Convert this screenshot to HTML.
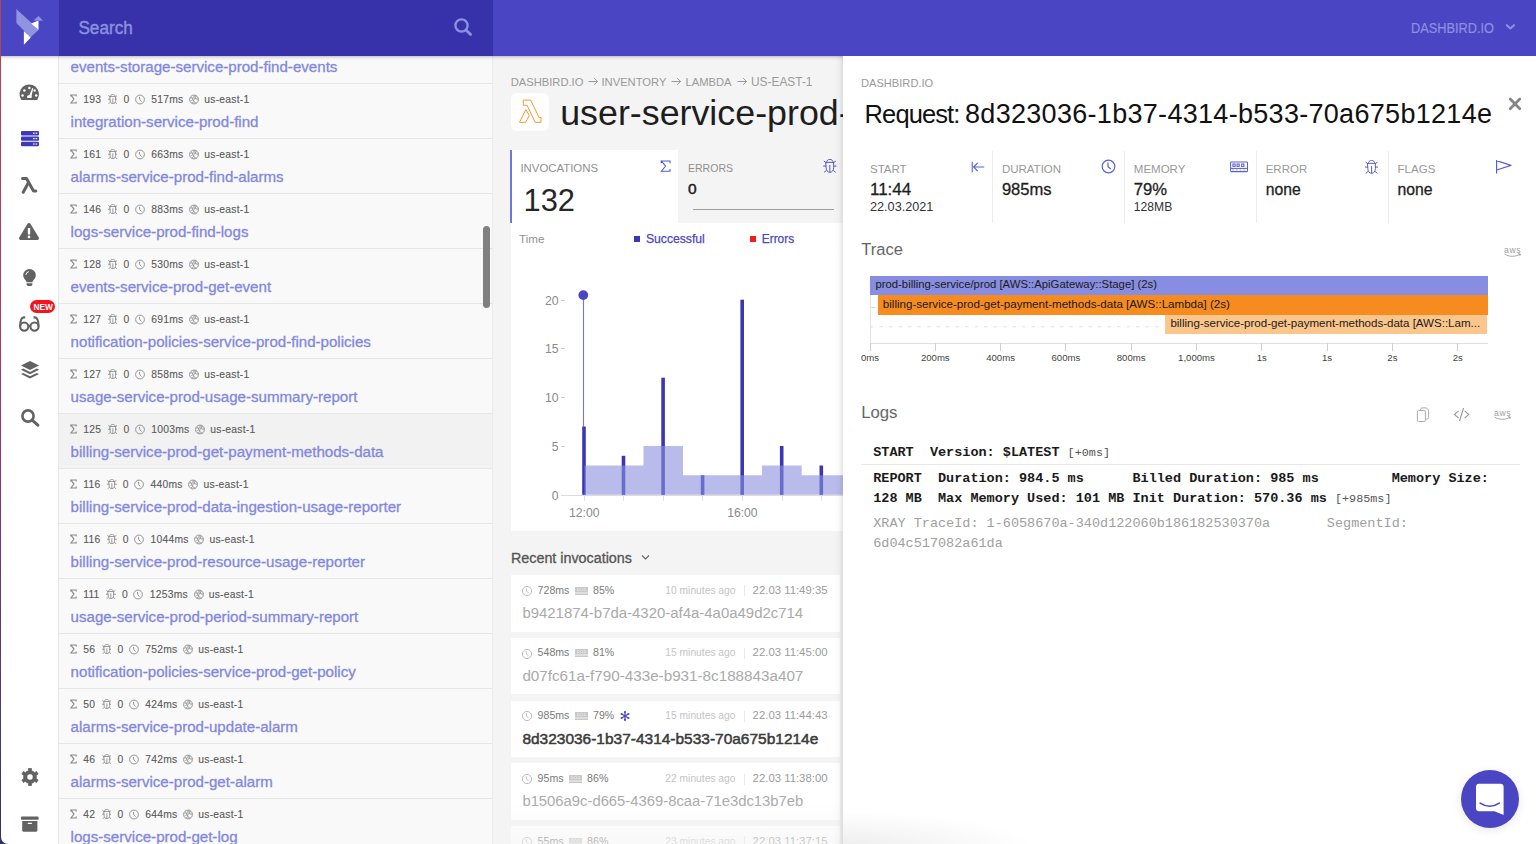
<!DOCTYPE html><html><head><meta charset="utf-8"><style>
html,body{margin:0;padding:0;}
body{width:1536px;height:844px;overflow:hidden;position:relative;background:#fff;font-family:"Liberation Sans",sans-serif;}
.r{position:absolute;}
.t{position:absolute;white-space:pre;line-height:1;}
.m{font-family:"Liberation Mono",monospace;}
</style></head><body>

<div class="r" style="left:0px;top:0px;width:1536px;height:844px;background:#fff;"></div>
<div class="r" style="left:59px;top:56px;width:434px;height:788px;background:#f9f9f9;"></div>
<div class="r" style="left:493px;top:56px;width:350px;height:788px;background:#f4f4f4;"></div>
<div class="r" style="left:492px;top:56px;width:1px;height:788px;background:#ebebeb;"></div>
<div class="r" style="left:59px;top:83px;width:433px;height:1px;background:#e6e6e6;"></div>
<div class="t " style="left:70.60px;top:59.20px;font-size:15.10px;color:#8387df;-webkit-text-stroke:0.3px #8387df;">events-storage-service-prod-find-events</div>
<div class="r" style="left:59px;top:138px;width:433px;height:1px;background:#e6e6e6;"></div>
<svg class="r" style="left:70px;top:94px;" width="8" height="11" viewBox="0 0 8 11"><path d="M0.8 2.6V1H6.2V2.6M1 1.2L4 5.1L1 9H6.2V7.4" fill="none" stroke="#8a8a8a" stroke-width="1.15" stroke-linejoin="miter"/></svg>
<div class="t " style="left:83.20px;top:95.20px;font-size:10.30px;color:#5a5a5a;letter-spacing:0.25px;-webkit-text-stroke:0.12px #5a5a5a;">193</div>
<svg class="r" style="left:107.6px;top:94.0px;" width="9.7" height="10.2" viewBox="0 0 13.2 13.8"><g fill="none" stroke="#8a8a8a" stroke-width="1.15" stroke-linecap="round" stroke-linejoin="round"><path d="M3.4 3.3C3.4 1.5 4.8 0.4 6.6 0.4S9.8 1.5 9.8 3.3"/><path d="M2.8 3.4H10.4V8.6C10.4 11.4 8.8 13.3 6.6 13.3S2.8 11.4 2.8 8.6Z"/><path d="M6.6 6.4V13M0.9 2.3L2.8 3.6M12.3 2.3L10.4 3.6M0.3 7.1H2.8M12.9 7.1H10.4M1 13.2L2.9 11.6M12.2 13.2L10.3 11.6"/></g></svg>
<div class="t " style="left:123.53px;top:95.20px;font-size:10.30px;color:#5a5a5a;letter-spacing:0.25px;-webkit-text-stroke:0.12px #5a5a5a;">0</div>
<svg class="r" style="left:134.8px;top:93.6px;" width="10" height="11" viewBox="0 0 10 11"><g fill="none" stroke="#8a8a8a" stroke-width="0.9"><circle cx="5" cy="5.5" r="4.4"/><path d="M4.4 2.9L4.9 5.9L6.6 7.6"/></g></svg>
<div class="t " style="left:151.31px;top:95.20px;font-size:10.30px;color:#5a5a5a;letter-spacing:0.25px;-webkit-text-stroke:0.12px #5a5a5a;">517ms</div>
<svg class="r" style="left:189.1px;top:93.6px;" width="10" height="11" viewBox="0 0 10 11"><g fill="none" stroke="#8a8a8a" stroke-width="0.9"><circle cx="5" cy="5.5" r="4.4"/><path d="M1.6 4.2L3.2 3.6L3.6 5.4L2.6 7M4.4 7L5.2 5L4.8 2.4L6.4 1.4M7 1.8L6.4 4.6L8.6 5.2L9.4 4.6M3.2 9.2L4.4 7.6L6 8.2L7.2 9.6"/></g></svg>
<div class="t " style="left:204.27px;top:95.20px;font-size:10.30px;color:#5a5a5a;letter-spacing:0.25px;-webkit-text-stroke:0.12px #5a5a5a;">us-east-1</div>
<div class="t " style="left:70.60px;top:114.20px;font-size:15.10px;color:#8387df;-webkit-text-stroke:0.3px #8387df;">integration-service-prod-find</div>
<div class="r" style="left:59px;top:193px;width:433px;height:1px;background:#e6e6e6;"></div>
<svg class="r" style="left:70px;top:149px;" width="8" height="11" viewBox="0 0 8 11"><path d="M0.8 2.6V1H6.2V2.6M1 1.2L4 5.1L1 9H6.2V7.4" fill="none" stroke="#8a8a8a" stroke-width="1.15" stroke-linejoin="miter"/></svg>
<div class="t " style="left:83.20px;top:150.20px;font-size:10.30px;color:#5a5a5a;letter-spacing:0.25px;-webkit-text-stroke:0.12px #5a5a5a;">161</div>
<svg class="r" style="left:107.6px;top:149.0px;" width="9.7" height="10.2" viewBox="0 0 13.2 13.8"><g fill="none" stroke="#8a8a8a" stroke-width="1.15" stroke-linecap="round" stroke-linejoin="round"><path d="M3.4 3.3C3.4 1.5 4.8 0.4 6.6 0.4S9.8 1.5 9.8 3.3"/><path d="M2.8 3.4H10.4V8.6C10.4 11.4 8.8 13.3 6.6 13.3S2.8 11.4 2.8 8.6Z"/><path d="M6.6 6.4V13M0.9 2.3L2.8 3.6M12.3 2.3L10.4 3.6M0.3 7.1H2.8M12.9 7.1H10.4M1 13.2L2.9 11.6M12.2 13.2L10.3 11.6"/></g></svg>
<div class="t " style="left:123.53px;top:150.20px;font-size:10.30px;color:#5a5a5a;letter-spacing:0.25px;-webkit-text-stroke:0.12px #5a5a5a;">0</div>
<svg class="r" style="left:134.8px;top:148.6px;" width="10" height="11" viewBox="0 0 10 11"><g fill="none" stroke="#8a8a8a" stroke-width="0.9"><circle cx="5" cy="5.5" r="4.4"/><path d="M4.4 2.9L4.9 5.9L6.6 7.6"/></g></svg>
<div class="t " style="left:151.31px;top:150.20px;font-size:10.30px;color:#5a5a5a;letter-spacing:0.25px;-webkit-text-stroke:0.12px #5a5a5a;">663ms</div>
<svg class="r" style="left:189.1px;top:148.6px;" width="10" height="11" viewBox="0 0 10 11"><g fill="none" stroke="#8a8a8a" stroke-width="0.9"><circle cx="5" cy="5.5" r="4.4"/><path d="M1.6 4.2L3.2 3.6L3.6 5.4L2.6 7M4.4 7L5.2 5L4.8 2.4L6.4 1.4M7 1.8L6.4 4.6L8.6 5.2L9.4 4.6M3.2 9.2L4.4 7.6L6 8.2L7.2 9.6"/></g></svg>
<div class="t " style="left:204.27px;top:150.20px;font-size:10.30px;color:#5a5a5a;letter-spacing:0.25px;-webkit-text-stroke:0.12px #5a5a5a;">us-east-1</div>
<div class="t " style="left:70.60px;top:169.20px;font-size:15.10px;color:#8387df;-webkit-text-stroke:0.3px #8387df;">alarms-service-prod-find-alarms</div>
<div class="r" style="left:59px;top:248px;width:433px;height:1px;background:#e6e6e6;"></div>
<svg class="r" style="left:70px;top:204px;" width="8" height="11" viewBox="0 0 8 11"><path d="M0.8 2.6V1H6.2V2.6M1 1.2L4 5.1L1 9H6.2V7.4" fill="none" stroke="#8a8a8a" stroke-width="1.15" stroke-linejoin="miter"/></svg>
<div class="t " style="left:83.20px;top:205.20px;font-size:10.30px;color:#5a5a5a;letter-spacing:0.25px;-webkit-text-stroke:0.12px #5a5a5a;">146</div>
<svg class="r" style="left:107.6px;top:204.0px;" width="9.7" height="10.2" viewBox="0 0 13.2 13.8"><g fill="none" stroke="#8a8a8a" stroke-width="1.15" stroke-linecap="round" stroke-linejoin="round"><path d="M3.4 3.3C3.4 1.5 4.8 0.4 6.6 0.4S9.8 1.5 9.8 3.3"/><path d="M2.8 3.4H10.4V8.6C10.4 11.4 8.8 13.3 6.6 13.3S2.8 11.4 2.8 8.6Z"/><path d="M6.6 6.4V13M0.9 2.3L2.8 3.6M12.3 2.3L10.4 3.6M0.3 7.1H2.8M12.9 7.1H10.4M1 13.2L2.9 11.6M12.2 13.2L10.3 11.6"/></g></svg>
<div class="t " style="left:123.53px;top:205.20px;font-size:10.30px;color:#5a5a5a;letter-spacing:0.25px;-webkit-text-stroke:0.12px #5a5a5a;">0</div>
<svg class="r" style="left:134.8px;top:203.6px;" width="10" height="11" viewBox="0 0 10 11"><g fill="none" stroke="#8a8a8a" stroke-width="0.9"><circle cx="5" cy="5.5" r="4.4"/><path d="M4.4 2.9L4.9 5.9L6.6 7.6"/></g></svg>
<div class="t " style="left:151.31px;top:205.20px;font-size:10.30px;color:#5a5a5a;letter-spacing:0.25px;-webkit-text-stroke:0.12px #5a5a5a;">883ms</div>
<svg class="r" style="left:189.1px;top:203.6px;" width="10" height="11" viewBox="0 0 10 11"><g fill="none" stroke="#8a8a8a" stroke-width="0.9"><circle cx="5" cy="5.5" r="4.4"/><path d="M1.6 4.2L3.2 3.6L3.6 5.4L2.6 7M4.4 7L5.2 5L4.8 2.4L6.4 1.4M7 1.8L6.4 4.6L8.6 5.2L9.4 4.6M3.2 9.2L4.4 7.6L6 8.2L7.2 9.6"/></g></svg>
<div class="t " style="left:204.27px;top:205.20px;font-size:10.30px;color:#5a5a5a;letter-spacing:0.25px;-webkit-text-stroke:0.12px #5a5a5a;">us-east-1</div>
<div class="t " style="left:70.60px;top:224.20px;font-size:15.10px;color:#8387df;-webkit-text-stroke:0.3px #8387df;">logs-service-prod-find-logs</div>
<div class="r" style="left:59px;top:303px;width:433px;height:1px;background:#e6e6e6;"></div>
<svg class="r" style="left:70px;top:259px;" width="8" height="11" viewBox="0 0 8 11"><path d="M0.8 2.6V1H6.2V2.6M1 1.2L4 5.1L1 9H6.2V7.4" fill="none" stroke="#8a8a8a" stroke-width="1.15" stroke-linejoin="miter"/></svg>
<div class="t " style="left:83.20px;top:260.20px;font-size:10.30px;color:#5a5a5a;letter-spacing:0.25px;-webkit-text-stroke:0.12px #5a5a5a;">128</div>
<svg class="r" style="left:107.6px;top:259.0px;" width="9.7" height="10.2" viewBox="0 0 13.2 13.8"><g fill="none" stroke="#8a8a8a" stroke-width="1.15" stroke-linecap="round" stroke-linejoin="round"><path d="M3.4 3.3C3.4 1.5 4.8 0.4 6.6 0.4S9.8 1.5 9.8 3.3"/><path d="M2.8 3.4H10.4V8.6C10.4 11.4 8.8 13.3 6.6 13.3S2.8 11.4 2.8 8.6Z"/><path d="M6.6 6.4V13M0.9 2.3L2.8 3.6M12.3 2.3L10.4 3.6M0.3 7.1H2.8M12.9 7.1H10.4M1 13.2L2.9 11.6M12.2 13.2L10.3 11.6"/></g></svg>
<div class="t " style="left:123.53px;top:260.20px;font-size:10.30px;color:#5a5a5a;letter-spacing:0.25px;-webkit-text-stroke:0.12px #5a5a5a;">0</div>
<svg class="r" style="left:134.8px;top:258.6px;" width="10" height="11" viewBox="0 0 10 11"><g fill="none" stroke="#8a8a8a" stroke-width="0.9"><circle cx="5" cy="5.5" r="4.4"/><path d="M4.4 2.9L4.9 5.9L6.6 7.6"/></g></svg>
<div class="t " style="left:151.31px;top:260.20px;font-size:10.30px;color:#5a5a5a;letter-spacing:0.25px;-webkit-text-stroke:0.12px #5a5a5a;">530ms</div>
<svg class="r" style="left:189.1px;top:258.6px;" width="10" height="11" viewBox="0 0 10 11"><g fill="none" stroke="#8a8a8a" stroke-width="0.9"><circle cx="5" cy="5.5" r="4.4"/><path d="M1.6 4.2L3.2 3.6L3.6 5.4L2.6 7M4.4 7L5.2 5L4.8 2.4L6.4 1.4M7 1.8L6.4 4.6L8.6 5.2L9.4 4.6M3.2 9.2L4.4 7.6L6 8.2L7.2 9.6"/></g></svg>
<div class="t " style="left:204.27px;top:260.20px;font-size:10.30px;color:#5a5a5a;letter-spacing:0.25px;-webkit-text-stroke:0.12px #5a5a5a;">us-east-1</div>
<div class="t " style="left:70.60px;top:279.20px;font-size:15.10px;color:#8387df;-webkit-text-stroke:0.3px #8387df;">events-service-prod-get-event</div>
<div class="r" style="left:59px;top:358px;width:433px;height:1px;background:#e6e6e6;"></div>
<svg class="r" style="left:70px;top:314px;" width="8" height="11" viewBox="0 0 8 11"><path d="M0.8 2.6V1H6.2V2.6M1 1.2L4 5.1L1 9H6.2V7.4" fill="none" stroke="#8a8a8a" stroke-width="1.15" stroke-linejoin="miter"/></svg>
<div class="t " style="left:83.20px;top:315.20px;font-size:10.30px;color:#5a5a5a;letter-spacing:0.25px;-webkit-text-stroke:0.12px #5a5a5a;">127</div>
<svg class="r" style="left:107.6px;top:314.0px;" width="9.7" height="10.2" viewBox="0 0 13.2 13.8"><g fill="none" stroke="#8a8a8a" stroke-width="1.15" stroke-linecap="round" stroke-linejoin="round"><path d="M3.4 3.3C3.4 1.5 4.8 0.4 6.6 0.4S9.8 1.5 9.8 3.3"/><path d="M2.8 3.4H10.4V8.6C10.4 11.4 8.8 13.3 6.6 13.3S2.8 11.4 2.8 8.6Z"/><path d="M6.6 6.4V13M0.9 2.3L2.8 3.6M12.3 2.3L10.4 3.6M0.3 7.1H2.8M12.9 7.1H10.4M1 13.2L2.9 11.6M12.2 13.2L10.3 11.6"/></g></svg>
<div class="t " style="left:123.53px;top:315.20px;font-size:10.30px;color:#5a5a5a;letter-spacing:0.25px;-webkit-text-stroke:0.12px #5a5a5a;">0</div>
<svg class="r" style="left:134.8px;top:313.6px;" width="10" height="11" viewBox="0 0 10 11"><g fill="none" stroke="#8a8a8a" stroke-width="0.9"><circle cx="5" cy="5.5" r="4.4"/><path d="M4.4 2.9L4.9 5.9L6.6 7.6"/></g></svg>
<div class="t " style="left:151.31px;top:315.20px;font-size:10.30px;color:#5a5a5a;letter-spacing:0.25px;-webkit-text-stroke:0.12px #5a5a5a;">691ms</div>
<svg class="r" style="left:189.1px;top:313.6px;" width="10" height="11" viewBox="0 0 10 11"><g fill="none" stroke="#8a8a8a" stroke-width="0.9"><circle cx="5" cy="5.5" r="4.4"/><path d="M1.6 4.2L3.2 3.6L3.6 5.4L2.6 7M4.4 7L5.2 5L4.8 2.4L6.4 1.4M7 1.8L6.4 4.6L8.6 5.2L9.4 4.6M3.2 9.2L4.4 7.6L6 8.2L7.2 9.6"/></g></svg>
<div class="t " style="left:204.27px;top:315.20px;font-size:10.30px;color:#5a5a5a;letter-spacing:0.25px;-webkit-text-stroke:0.12px #5a5a5a;">us-east-1</div>
<div class="t " style="left:70.60px;top:334.20px;font-size:15.10px;color:#8387df;-webkit-text-stroke:0.3px #8387df;">notification-policies-service-prod-find-policies</div>
<div class="r" style="left:59px;top:413px;width:433px;height:1px;background:#e6e6e6;"></div>
<svg class="r" style="left:70px;top:369px;" width="8" height="11" viewBox="0 0 8 11"><path d="M0.8 2.6V1H6.2V2.6M1 1.2L4 5.1L1 9H6.2V7.4" fill="none" stroke="#8a8a8a" stroke-width="1.15" stroke-linejoin="miter"/></svg>
<div class="t " style="left:83.20px;top:370.20px;font-size:10.30px;color:#5a5a5a;letter-spacing:0.25px;-webkit-text-stroke:0.12px #5a5a5a;">127</div>
<svg class="r" style="left:107.6px;top:369.0px;" width="9.7" height="10.2" viewBox="0 0 13.2 13.8"><g fill="none" stroke="#8a8a8a" stroke-width="1.15" stroke-linecap="round" stroke-linejoin="round"><path d="M3.4 3.3C3.4 1.5 4.8 0.4 6.6 0.4S9.8 1.5 9.8 3.3"/><path d="M2.8 3.4H10.4V8.6C10.4 11.4 8.8 13.3 6.6 13.3S2.8 11.4 2.8 8.6Z"/><path d="M6.6 6.4V13M0.9 2.3L2.8 3.6M12.3 2.3L10.4 3.6M0.3 7.1H2.8M12.9 7.1H10.4M1 13.2L2.9 11.6M12.2 13.2L10.3 11.6"/></g></svg>
<div class="t " style="left:123.53px;top:370.20px;font-size:10.30px;color:#5a5a5a;letter-spacing:0.25px;-webkit-text-stroke:0.12px #5a5a5a;">0</div>
<svg class="r" style="left:134.8px;top:368.6px;" width="10" height="11" viewBox="0 0 10 11"><g fill="none" stroke="#8a8a8a" stroke-width="0.9"><circle cx="5" cy="5.5" r="4.4"/><path d="M4.4 2.9L4.9 5.9L6.6 7.6"/></g></svg>
<div class="t " style="left:151.31px;top:370.20px;font-size:10.30px;color:#5a5a5a;letter-spacing:0.25px;-webkit-text-stroke:0.12px #5a5a5a;">858ms</div>
<svg class="r" style="left:189.1px;top:368.6px;" width="10" height="11" viewBox="0 0 10 11"><g fill="none" stroke="#8a8a8a" stroke-width="0.9"><circle cx="5" cy="5.5" r="4.4"/><path d="M1.6 4.2L3.2 3.6L3.6 5.4L2.6 7M4.4 7L5.2 5L4.8 2.4L6.4 1.4M7 1.8L6.4 4.6L8.6 5.2L9.4 4.6M3.2 9.2L4.4 7.6L6 8.2L7.2 9.6"/></g></svg>
<div class="t " style="left:204.27px;top:370.20px;font-size:10.30px;color:#5a5a5a;letter-spacing:0.25px;-webkit-text-stroke:0.12px #5a5a5a;">us-east-1</div>
<div class="t " style="left:70.60px;top:389.20px;font-size:15.10px;color:#8387df;-webkit-text-stroke:0.3px #8387df;">usage-service-prod-usage-summary-report</div>
<div class="r" style="left:59px;top:414px;width:433px;height:54px;background:#f2f2f2;"></div>
<div class="r" style="left:59px;top:468px;width:433px;height:1px;background:#e6e6e6;"></div>
<svg class="r" style="left:70px;top:424px;" width="8" height="11" viewBox="0 0 8 11"><path d="M0.8 2.6V1H6.2V2.6M1 1.2L4 5.1L1 9H6.2V7.4" fill="none" stroke="#8a8a8a" stroke-width="1.15" stroke-linejoin="miter"/></svg>
<div class="t " style="left:83.20px;top:425.20px;font-size:10.30px;color:#5a5a5a;letter-spacing:0.25px;-webkit-text-stroke:0.12px #5a5a5a;">125</div>
<svg class="r" style="left:107.6px;top:424.0px;" width="9.7" height="10.2" viewBox="0 0 13.2 13.8"><g fill="none" stroke="#8a8a8a" stroke-width="1.15" stroke-linecap="round" stroke-linejoin="round"><path d="M3.4 3.3C3.4 1.5 4.8 0.4 6.6 0.4S9.8 1.5 9.8 3.3"/><path d="M2.8 3.4H10.4V8.6C10.4 11.4 8.8 13.3 6.6 13.3S2.8 11.4 2.8 8.6Z"/><path d="M6.6 6.4V13M0.9 2.3L2.8 3.6M12.3 2.3L10.4 3.6M0.3 7.1H2.8M12.9 7.1H10.4M1 13.2L2.9 11.6M12.2 13.2L10.3 11.6"/></g></svg>
<div class="t " style="left:123.53px;top:425.20px;font-size:10.30px;color:#5a5a5a;letter-spacing:0.25px;-webkit-text-stroke:0.12px #5a5a5a;">0</div>
<svg class="r" style="left:134.8px;top:423.6px;" width="10" height="11" viewBox="0 0 10 11"><g fill="none" stroke="#8a8a8a" stroke-width="0.9"><circle cx="5" cy="5.5" r="4.4"/><path d="M4.4 2.9L4.9 5.9L6.6 7.6"/></g></svg>
<div class="t " style="left:151.31px;top:425.20px;font-size:10.30px;color:#5a5a5a;letter-spacing:0.25px;-webkit-text-stroke:0.12px #5a5a5a;">1003ms</div>
<svg class="r" style="left:195.1px;top:423.6px;" width="10" height="11" viewBox="0 0 10 11"><g fill="none" stroke="#8a8a8a" stroke-width="0.9"><circle cx="5" cy="5.5" r="4.4"/><path d="M1.6 4.2L3.2 3.6L3.6 5.4L2.6 7M4.4 7L5.2 5L4.8 2.4L6.4 1.4M7 1.8L6.4 4.6L8.6 5.2L9.4 4.6M3.2 9.2L4.4 7.6L6 8.2L7.2 9.6"/></g></svg>
<div class="t " style="left:210.25px;top:425.20px;font-size:10.30px;color:#5a5a5a;letter-spacing:0.25px;-webkit-text-stroke:0.12px #5a5a5a;">us-east-1</div>
<div class="t " style="left:70.60px;top:444.20px;font-size:15.10px;color:#8387df;-webkit-text-stroke:0.3px #8387df;">billing-service-prod-get-payment-methods-data</div>
<div class="r" style="left:59px;top:523px;width:433px;height:1px;background:#e6e6e6;"></div>
<svg class="r" style="left:70px;top:479px;" width="8" height="11" viewBox="0 0 8 11"><path d="M0.8 2.6V1H6.2V2.6M1 1.2L4 5.1L1 9H6.2V7.4" fill="none" stroke="#8a8a8a" stroke-width="1.15" stroke-linejoin="miter"/></svg>
<div class="t " style="left:83.20px;top:480.20px;font-size:10.30px;color:#5a5a5a;letter-spacing:0.25px;-webkit-text-stroke:0.12px #5a5a5a;">116</div>
<svg class="r" style="left:106.9px;top:479.0px;" width="9.7" height="10.2" viewBox="0 0 13.2 13.8"><g fill="none" stroke="#8a8a8a" stroke-width="1.15" stroke-linecap="round" stroke-linejoin="round"><path d="M3.4 3.3C3.4 1.5 4.8 0.4 6.6 0.4S9.8 1.5 9.8 3.3"/><path d="M2.8 3.4H10.4V8.6C10.4 11.4 8.8 13.3 6.6 13.3S2.8 11.4 2.8 8.6Z"/><path d="M6.6 6.4V13M0.9 2.3L2.8 3.6M12.3 2.3L10.4 3.6M0.3 7.1H2.8M12.9 7.1H10.4M1 13.2L2.9 11.6M12.2 13.2L10.3 11.6"/></g></svg>
<div class="t " style="left:122.77px;top:480.20px;font-size:10.30px;color:#5a5a5a;letter-spacing:0.25px;-webkit-text-stroke:0.12px #5a5a5a;">0</div>
<svg class="r" style="left:134.0px;top:478.6px;" width="10" height="11" viewBox="0 0 10 11"><g fill="none" stroke="#8a8a8a" stroke-width="0.9"><circle cx="5" cy="5.5" r="4.4"/><path d="M4.4 2.9L4.9 5.9L6.6 7.6"/></g></svg>
<div class="t " style="left:150.55px;top:480.20px;font-size:10.30px;color:#5a5a5a;letter-spacing:0.25px;-webkit-text-stroke:0.12px #5a5a5a;">440ms</div>
<svg class="r" style="left:188.3px;top:478.6px;" width="10" height="11" viewBox="0 0 10 11"><g fill="none" stroke="#8a8a8a" stroke-width="0.9"><circle cx="5" cy="5.5" r="4.4"/><path d="M1.6 4.2L3.2 3.6L3.6 5.4L2.6 7M4.4 7L5.2 5L4.8 2.4L6.4 1.4M7 1.8L6.4 4.6L8.6 5.2L9.4 4.6M3.2 9.2L4.4 7.6L6 8.2L7.2 9.6"/></g></svg>
<div class="t " style="left:203.51px;top:480.20px;font-size:10.30px;color:#5a5a5a;letter-spacing:0.25px;-webkit-text-stroke:0.12px #5a5a5a;">us-east-1</div>
<div class="t " style="left:70.60px;top:499.20px;font-size:15.10px;color:#8387df;-webkit-text-stroke:0.3px #8387df;">billing-service-prod-data-ingestion-usage-reporter</div>
<div class="r" style="left:59px;top:578px;width:433px;height:1px;background:#e6e6e6;"></div>
<svg class="r" style="left:70px;top:534px;" width="8" height="11" viewBox="0 0 8 11"><path d="M0.8 2.6V1H6.2V2.6M1 1.2L4 5.1L1 9H6.2V7.4" fill="none" stroke="#8a8a8a" stroke-width="1.15" stroke-linejoin="miter"/></svg>
<div class="t " style="left:83.20px;top:535.20px;font-size:10.30px;color:#5a5a5a;letter-spacing:0.25px;-webkit-text-stroke:0.12px #5a5a5a;">116</div>
<svg class="r" style="left:106.9px;top:534.0px;" width="9.7" height="10.2" viewBox="0 0 13.2 13.8"><g fill="none" stroke="#8a8a8a" stroke-width="1.15" stroke-linecap="round" stroke-linejoin="round"><path d="M3.4 3.3C3.4 1.5 4.8 0.4 6.6 0.4S9.8 1.5 9.8 3.3"/><path d="M2.8 3.4H10.4V8.6C10.4 11.4 8.8 13.3 6.6 13.3S2.8 11.4 2.8 8.6Z"/><path d="M6.6 6.4V13M0.9 2.3L2.8 3.6M12.3 2.3L10.4 3.6M0.3 7.1H2.8M12.9 7.1H10.4M1 13.2L2.9 11.6M12.2 13.2L10.3 11.6"/></g></svg>
<div class="t " style="left:122.77px;top:535.20px;font-size:10.30px;color:#5a5a5a;letter-spacing:0.25px;-webkit-text-stroke:0.12px #5a5a5a;">0</div>
<svg class="r" style="left:134.0px;top:533.6px;" width="10" height="11" viewBox="0 0 10 11"><g fill="none" stroke="#8a8a8a" stroke-width="0.9"><circle cx="5" cy="5.5" r="4.4"/><path d="M4.4 2.9L4.9 5.9L6.6 7.6"/></g></svg>
<div class="t " style="left:150.55px;top:535.20px;font-size:10.30px;color:#5a5a5a;letter-spacing:0.25px;-webkit-text-stroke:0.12px #5a5a5a;">1044ms</div>
<svg class="r" style="left:194.3px;top:533.6px;" width="10" height="11" viewBox="0 0 10 11"><g fill="none" stroke="#8a8a8a" stroke-width="0.9"><circle cx="5" cy="5.5" r="4.4"/><path d="M1.6 4.2L3.2 3.6L3.6 5.4L2.6 7M4.4 7L5.2 5L4.8 2.4L6.4 1.4M7 1.8L6.4 4.6L8.6 5.2L9.4 4.6M3.2 9.2L4.4 7.6L6 8.2L7.2 9.6"/></g></svg>
<div class="t " style="left:209.49px;top:535.20px;font-size:10.30px;color:#5a5a5a;letter-spacing:0.25px;-webkit-text-stroke:0.12px #5a5a5a;">us-east-1</div>
<div class="t " style="left:70.60px;top:554.20px;font-size:15.10px;color:#8387df;-webkit-text-stroke:0.3px #8387df;">billing-service-prod-resource-usage-reporter</div>
<div class="r" style="left:59px;top:633px;width:433px;height:1px;background:#e6e6e6;"></div>
<svg class="r" style="left:70px;top:589px;" width="8" height="11" viewBox="0 0 8 11"><path d="M0.8 2.6V1H6.2V2.6M1 1.2L4 5.1L1 9H6.2V7.4" fill="none" stroke="#8a8a8a" stroke-width="1.15" stroke-linejoin="miter"/></svg>
<div class="t " style="left:83.20px;top:590.20px;font-size:10.30px;color:#5a5a5a;letter-spacing:0.25px;-webkit-text-stroke:0.12px #5a5a5a;">111</div>
<svg class="r" style="left:106.1px;top:589.0px;" width="9.7" height="10.2" viewBox="0 0 13.2 13.8"><g fill="none" stroke="#8a8a8a" stroke-width="1.15" stroke-linecap="round" stroke-linejoin="round"><path d="M3.4 3.3C3.4 1.5 4.8 0.4 6.6 0.4S9.8 1.5 9.8 3.3"/><path d="M2.8 3.4H10.4V8.6C10.4 11.4 8.8 13.3 6.6 13.3S2.8 11.4 2.8 8.6Z"/><path d="M6.6 6.4V13M0.9 2.3L2.8 3.6M12.3 2.3L10.4 3.6M0.3 7.1H2.8M12.9 7.1H10.4M1 13.2L2.9 11.6M12.2 13.2L10.3 11.6"/></g></svg>
<div class="t " style="left:122.00px;top:590.20px;font-size:10.30px;color:#5a5a5a;letter-spacing:0.25px;-webkit-text-stroke:0.12px #5a5a5a;">0</div>
<svg class="r" style="left:133.3px;top:588.6px;" width="10" height="11" viewBox="0 0 10 11"><g fill="none" stroke="#8a8a8a" stroke-width="0.9"><circle cx="5" cy="5.5" r="4.4"/><path d="M4.4 2.9L4.9 5.9L6.6 7.6"/></g></svg>
<div class="t " style="left:149.78px;top:590.20px;font-size:10.30px;color:#5a5a5a;letter-spacing:0.25px;-webkit-text-stroke:0.12px #5a5a5a;">1253ms</div>
<svg class="r" style="left:193.5px;top:588.6px;" width="10" height="11" viewBox="0 0 10 11"><g fill="none" stroke="#8a8a8a" stroke-width="0.9"><circle cx="5" cy="5.5" r="4.4"/><path d="M1.6 4.2L3.2 3.6L3.6 5.4L2.6 7M4.4 7L5.2 5L4.8 2.4L6.4 1.4M7 1.8L6.4 4.6L8.6 5.2L9.4 4.6M3.2 9.2L4.4 7.6L6 8.2L7.2 9.6"/></g></svg>
<div class="t " style="left:208.72px;top:590.20px;font-size:10.30px;color:#5a5a5a;letter-spacing:0.25px;-webkit-text-stroke:0.12px #5a5a5a;">us-east-1</div>
<div class="t " style="left:70.60px;top:609.20px;font-size:15.10px;color:#8387df;-webkit-text-stroke:0.3px #8387df;">usage-service-prod-period-summary-report</div>
<div class="r" style="left:59px;top:688px;width:433px;height:1px;background:#e6e6e6;"></div>
<svg class="r" style="left:70px;top:644px;" width="8" height="11" viewBox="0 0 8 11"><path d="M0.8 2.6V1H6.2V2.6M1 1.2L4 5.1L1 9H6.2V7.4" fill="none" stroke="#8a8a8a" stroke-width="1.15" stroke-linejoin="miter"/></svg>
<div class="t " style="left:83.20px;top:645.20px;font-size:10.30px;color:#5a5a5a;letter-spacing:0.25px;-webkit-text-stroke:0.12px #5a5a5a;">56</div>
<svg class="r" style="left:101.7px;top:644.0px;" width="9.7" height="10.2" viewBox="0 0 13.2 13.8"><g fill="none" stroke="#8a8a8a" stroke-width="1.15" stroke-linecap="round" stroke-linejoin="round"><path d="M3.4 3.3C3.4 1.5 4.8 0.4 6.6 0.4S9.8 1.5 9.8 3.3"/><path d="M2.8 3.4H10.4V8.6C10.4 11.4 8.8 13.3 6.6 13.3S2.8 11.4 2.8 8.6Z"/><path d="M6.6 6.4V13M0.9 2.3L2.8 3.6M12.3 2.3L10.4 3.6M0.3 7.1H2.8M12.9 7.1H10.4M1 13.2L2.9 11.6M12.2 13.2L10.3 11.6"/></g></svg>
<div class="t " style="left:117.56px;top:645.20px;font-size:10.30px;color:#5a5a5a;letter-spacing:0.25px;-webkit-text-stroke:0.12px #5a5a5a;">0</div>
<svg class="r" style="left:128.8px;top:643.6px;" width="10" height="11" viewBox="0 0 10 11"><g fill="none" stroke="#8a8a8a" stroke-width="0.9"><circle cx="5" cy="5.5" r="4.4"/><path d="M4.4 2.9L4.9 5.9L6.6 7.6"/></g></svg>
<div class="t " style="left:145.33px;top:645.20px;font-size:10.30px;color:#5a5a5a;letter-spacing:0.25px;-webkit-text-stroke:0.12px #5a5a5a;">752ms</div>
<svg class="r" style="left:183.1px;top:643.6px;" width="10" height="11" viewBox="0 0 10 11"><g fill="none" stroke="#8a8a8a" stroke-width="0.9"><circle cx="5" cy="5.5" r="4.4"/><path d="M1.6 4.2L3.2 3.6L3.6 5.4L2.6 7M4.4 7L5.2 5L4.8 2.4L6.4 1.4M7 1.8L6.4 4.6L8.6 5.2L9.4 4.6M3.2 9.2L4.4 7.6L6 8.2L7.2 9.6"/></g></svg>
<div class="t " style="left:198.30px;top:645.20px;font-size:10.30px;color:#5a5a5a;letter-spacing:0.25px;-webkit-text-stroke:0.12px #5a5a5a;">us-east-1</div>
<div class="t " style="left:70.60px;top:664.20px;font-size:15.10px;color:#8387df;-webkit-text-stroke:0.3px #8387df;">notification-policies-service-prod-get-policy</div>
<div class="r" style="left:59px;top:743px;width:433px;height:1px;background:#e6e6e6;"></div>
<svg class="r" style="left:70px;top:699px;" width="8" height="11" viewBox="0 0 8 11"><path d="M0.8 2.6V1H6.2V2.6M1 1.2L4 5.1L1 9H6.2V7.4" fill="none" stroke="#8a8a8a" stroke-width="1.15" stroke-linejoin="miter"/></svg>
<div class="t " style="left:83.20px;top:700.20px;font-size:10.30px;color:#5a5a5a;letter-spacing:0.25px;-webkit-text-stroke:0.12px #5a5a5a;">50</div>
<svg class="r" style="left:101.7px;top:699.0px;" width="9.7" height="10.2" viewBox="0 0 13.2 13.8"><g fill="none" stroke="#8a8a8a" stroke-width="1.15" stroke-linecap="round" stroke-linejoin="round"><path d="M3.4 3.3C3.4 1.5 4.8 0.4 6.6 0.4S9.8 1.5 9.8 3.3"/><path d="M2.8 3.4H10.4V8.6C10.4 11.4 8.8 13.3 6.6 13.3S2.8 11.4 2.8 8.6Z"/><path d="M6.6 6.4V13M0.9 2.3L2.8 3.6M12.3 2.3L10.4 3.6M0.3 7.1H2.8M12.9 7.1H10.4M1 13.2L2.9 11.6M12.2 13.2L10.3 11.6"/></g></svg>
<div class="t " style="left:117.56px;top:700.20px;font-size:10.30px;color:#5a5a5a;letter-spacing:0.25px;-webkit-text-stroke:0.12px #5a5a5a;">0</div>
<svg class="r" style="left:128.8px;top:698.6px;" width="10" height="11" viewBox="0 0 10 11"><g fill="none" stroke="#8a8a8a" stroke-width="0.9"><circle cx="5" cy="5.5" r="4.4"/><path d="M4.4 2.9L4.9 5.9L6.6 7.6"/></g></svg>
<div class="t " style="left:145.33px;top:700.20px;font-size:10.30px;color:#5a5a5a;letter-spacing:0.25px;-webkit-text-stroke:0.12px #5a5a5a;">424ms</div>
<svg class="r" style="left:183.1px;top:698.6px;" width="10" height="11" viewBox="0 0 10 11"><g fill="none" stroke="#8a8a8a" stroke-width="0.9"><circle cx="5" cy="5.5" r="4.4"/><path d="M1.6 4.2L3.2 3.6L3.6 5.4L2.6 7M4.4 7L5.2 5L4.8 2.4L6.4 1.4M7 1.8L6.4 4.6L8.6 5.2L9.4 4.6M3.2 9.2L4.4 7.6L6 8.2L7.2 9.6"/></g></svg>
<div class="t " style="left:198.30px;top:700.20px;font-size:10.30px;color:#5a5a5a;letter-spacing:0.25px;-webkit-text-stroke:0.12px #5a5a5a;">us-east-1</div>
<div class="t " style="left:70.60px;top:719.20px;font-size:15.10px;color:#8387df;-webkit-text-stroke:0.3px #8387df;">alarms-service-prod-update-alarm</div>
<div class="r" style="left:59px;top:798px;width:433px;height:1px;background:#e6e6e6;"></div>
<svg class="r" style="left:70px;top:754px;" width="8" height="11" viewBox="0 0 8 11"><path d="M0.8 2.6V1H6.2V2.6M1 1.2L4 5.1L1 9H6.2V7.4" fill="none" stroke="#8a8a8a" stroke-width="1.15" stroke-linejoin="miter"/></svg>
<div class="t " style="left:83.20px;top:755.20px;font-size:10.30px;color:#5a5a5a;letter-spacing:0.25px;-webkit-text-stroke:0.12px #5a5a5a;">46</div>
<svg class="r" style="left:101.7px;top:754.0px;" width="9.7" height="10.2" viewBox="0 0 13.2 13.8"><g fill="none" stroke="#8a8a8a" stroke-width="1.15" stroke-linecap="round" stroke-linejoin="round"><path d="M3.4 3.3C3.4 1.5 4.8 0.4 6.6 0.4S9.8 1.5 9.8 3.3"/><path d="M2.8 3.4H10.4V8.6C10.4 11.4 8.8 13.3 6.6 13.3S2.8 11.4 2.8 8.6Z"/><path d="M6.6 6.4V13M0.9 2.3L2.8 3.6M12.3 2.3L10.4 3.6M0.3 7.1H2.8M12.9 7.1H10.4M1 13.2L2.9 11.6M12.2 13.2L10.3 11.6"/></g></svg>
<div class="t " style="left:117.56px;top:755.20px;font-size:10.30px;color:#5a5a5a;letter-spacing:0.25px;-webkit-text-stroke:0.12px #5a5a5a;">0</div>
<svg class="r" style="left:128.8px;top:753.6px;" width="10" height="11" viewBox="0 0 10 11"><g fill="none" stroke="#8a8a8a" stroke-width="0.9"><circle cx="5" cy="5.5" r="4.4"/><path d="M4.4 2.9L4.9 5.9L6.6 7.6"/></g></svg>
<div class="t " style="left:145.33px;top:755.20px;font-size:10.30px;color:#5a5a5a;letter-spacing:0.25px;-webkit-text-stroke:0.12px #5a5a5a;">742ms</div>
<svg class="r" style="left:183.1px;top:753.6px;" width="10" height="11" viewBox="0 0 10 11"><g fill="none" stroke="#8a8a8a" stroke-width="0.9"><circle cx="5" cy="5.5" r="4.4"/><path d="M1.6 4.2L3.2 3.6L3.6 5.4L2.6 7M4.4 7L5.2 5L4.8 2.4L6.4 1.4M7 1.8L6.4 4.6L8.6 5.2L9.4 4.6M3.2 9.2L4.4 7.6L6 8.2L7.2 9.6"/></g></svg>
<div class="t " style="left:198.30px;top:755.20px;font-size:10.30px;color:#5a5a5a;letter-spacing:0.25px;-webkit-text-stroke:0.12px #5a5a5a;">us-east-1</div>
<div class="t " style="left:70.60px;top:774.20px;font-size:15.10px;color:#8387df;-webkit-text-stroke:0.3px #8387df;">alarms-service-prod-get-alarm</div>
<div class="r" style="left:59px;top:853px;width:433px;height:1px;background:#e6e6e6;"></div>
<svg class="r" style="left:70px;top:809px;" width="8" height="11" viewBox="0 0 8 11"><path d="M0.8 2.6V1H6.2V2.6M1 1.2L4 5.1L1 9H6.2V7.4" fill="none" stroke="#8a8a8a" stroke-width="1.15" stroke-linejoin="miter"/></svg>
<div class="t " style="left:83.20px;top:810.20px;font-size:10.30px;color:#5a5a5a;letter-spacing:0.25px;-webkit-text-stroke:0.12px #5a5a5a;">42</div>
<svg class="r" style="left:101.7px;top:809.0px;" width="9.7" height="10.2" viewBox="0 0 13.2 13.8"><g fill="none" stroke="#8a8a8a" stroke-width="1.15" stroke-linecap="round" stroke-linejoin="round"><path d="M3.4 3.3C3.4 1.5 4.8 0.4 6.6 0.4S9.8 1.5 9.8 3.3"/><path d="M2.8 3.4H10.4V8.6C10.4 11.4 8.8 13.3 6.6 13.3S2.8 11.4 2.8 8.6Z"/><path d="M6.6 6.4V13M0.9 2.3L2.8 3.6M12.3 2.3L10.4 3.6M0.3 7.1H2.8M12.9 7.1H10.4M1 13.2L2.9 11.6M12.2 13.2L10.3 11.6"/></g></svg>
<div class="t " style="left:117.56px;top:810.20px;font-size:10.30px;color:#5a5a5a;letter-spacing:0.25px;-webkit-text-stroke:0.12px #5a5a5a;">0</div>
<svg class="r" style="left:128.8px;top:808.6px;" width="10" height="11" viewBox="0 0 10 11"><g fill="none" stroke="#8a8a8a" stroke-width="0.9"><circle cx="5" cy="5.5" r="4.4"/><path d="M4.4 2.9L4.9 5.9L6.6 7.6"/></g></svg>
<div class="t " style="left:145.33px;top:810.20px;font-size:10.30px;color:#5a5a5a;letter-spacing:0.25px;-webkit-text-stroke:0.12px #5a5a5a;">644ms</div>
<svg class="r" style="left:183.1px;top:808.6px;" width="10" height="11" viewBox="0 0 10 11"><g fill="none" stroke="#8a8a8a" stroke-width="0.9"><circle cx="5" cy="5.5" r="4.4"/><path d="M1.6 4.2L3.2 3.6L3.6 5.4L2.6 7M4.4 7L5.2 5L4.8 2.4L6.4 1.4M7 1.8L6.4 4.6L8.6 5.2L9.4 4.6M3.2 9.2L4.4 7.6L6 8.2L7.2 9.6"/></g></svg>
<div class="t " style="left:198.30px;top:810.20px;font-size:10.30px;color:#5a5a5a;letter-spacing:0.25px;-webkit-text-stroke:0.12px #5a5a5a;">us-east-1</div>
<div class="t " style="left:70.60px;top:829.20px;font-size:15.10px;color:#8387df;-webkit-text-stroke:0.3px #8387df;">logs-service-prod-get-log</div>
<div class="r" style="left:483px;top:225.5px;width:7px;height:82px;background:#808080;border-radius:3.5px;"></div>
<div class="r" style="left:58px;top:56px;width:1px;height:788px;background:#e8e8e8;"></div>
<div class="r" style="left:0px;top:56px;width:58px;height:788px;background:#fff;"></div>
<div class="r" style="left:0px;top:830px;width:14px;height:14px;background:#30306a;"></div>
<div class="r" style="left:1.2px;top:814px;width:19px;height:30px;background:#fff;border-bottom-left-radius:7px;"></div>
<div class="r" style="left:0px;top:0px;width:1.2px;height:844px;background:linear-gradient(#b0484f 0%, #b43c64 35%, #923a6e 52%, #733773 66%, #4a3a78 85%, #30306a 100%);"></div>
<svg class="r" style="left:14px;top:80px;" width="30" height="24" viewBox="0 0 30 24"><path d="M7.0 19.4A9.75 9.75 0 1 1 23.5 19.4Q23 20 22.3 20H8.2Q7.5 20 7.0 19.4Z" fill="#626262"/><g fill="#fff"><circle cx="15.35" cy="8.1" r="1.25"/><circle cx="10.4" cy="10.4" r="1.25"/><circle cx="20.6" cy="10.4" r="1.25"/><circle cx="8.5" cy="15.6" r="1.25"/><circle cx="22.2" cy="15.6" r="1.25"/><path d="M18.3 7.9L19.2 8.2L17.7 15.2V17.6Q17.7 18 17.3 18H13.5Q13.1 18 13.1 17.6V16.6Q13.3 15.2 15.4 15.1Z"/></g></svg>
<svg class="r" style="left:21px;top:131px;" width="18" height="16" viewBox="0 0 18 16"><rect x="0" y="0" width="18" height="4.4" rx="1" fill="#3d39b8"/><rect x="0" y="5.4" width="18" height="4.4" rx="1" fill="#3d39b8"/><rect x="0" y="10.8" width="18" height="4.4" rx="1" fill="#3d39b8"/><g fill="#fff"><rect x="12" y="1.6" width="1.6" height="1.2"/><rect x="14.6" y="1.6" width="1.6" height="1.2"/><rect x="12" y="7" width="1.6" height="1.2"/><rect x="14.6" y="7" width="1.6" height="1.2"/><rect x="12" y="12.4" width="1.6" height="1.2"/><rect x="14.6" y="12.4" width="1.6" height="1.2"/></g></svg>
<svg class="r" style="left:20px;top:177px;" width="18" height="17" viewBox="0 0 18 17"><path d="M2.5 1.5H6.5L13.5 14H15.8" fill="none" stroke="#626262" stroke-width="3" stroke-linejoin="round" stroke-linecap="round"/><path d="M8.3 6L3.2 15.2" fill="none" stroke="#626262" stroke-width="3" stroke-linecap="round"/></svg>
<svg class="r" style="left:18px;top:222px;" width="22" height="19" viewBox="0 0 22 19"><path d="M11 1C10.3 1 9.8 1.4 9.4 2L1.2 15.6C0.6 16.7 1.3 18 2.6 18H19.4C20.7 18 21.4 16.7 20.8 15.6L12.6 2C12.2 1.4 11.7 1 11 1Z" fill="#626262"/><rect x="9.8" y="6" width="2.4" height="6.5" rx="0.6" fill="#fff"/><circle cx="11" cy="14.9" r="1.3" fill="#fff"/></svg>
<svg class="r" style="left:22px;top:268px;" width="15" height="19" viewBox="0 0 15 19"><path d="M7.5 1A6.3 6.3 0 0 0 1.2 7.3C1.2 9.5 2.4 11 3.6 12.3C4.2 13 4.5 13.6 4.5 14.3H10.5C10.5 13.6 10.8 13 11.4 12.3C12.6 11 13.8 9.5 13.8 7.3A6.3 6.3 0 0 0 7.5 1Z" fill="#626262"/><path d="M4.6 15.3H10.4V16.2C10.4 17.3 9.6 18 8.5 18H6.5C5.4 18 4.6 17.3 4.6 16.2Z" fill="#626262"/><path d="M3.8 7A3.8 3.8 0 0 1 7 3.6" fill="none" stroke="#fff" stroke-width="0.9"/></svg>
<svg class="r" style="left:14px;top:312px;" width="30" height="22" viewBox="0 0 30 22"><g fill="none" stroke="#626262" stroke-width="2.1"><circle cx="10.2" cy="14.6" r="4.1"/><circle cx="20.5" cy="14.6" r="4.1"/><path d="M14.2 14.3Q15.35 13.2 16.5 14.3"/><path d="M6.2 14.6C6.2 9 7.2 5.5 9.8 5.4H11.2"/><path d="M24.5 14.6C24.5 9 23.5 5.5 20.9 5.4H19.5"/></g></svg>
<div class="r" style="left:30px;top:300px;width:25px;height:13px;background:#f5141e;border-radius:6.5px;"></div>
<div class="t " style="left:33.60px;top:303.20px;font-size:8.30px;color:#fff;font-weight:bold;">NEW</div>
<svg class="r" style="left:20px;top:360px;" width="20" height="20" viewBox="0 0 20 20"><path d="M10 1L19 5.5L10 10L1 5.5Z" fill="#626262"/><path d="M3.2 8.6L10 12L16.8 8.6L19 9.8L10 14.3L1 9.8Z" fill="#626262"/><path d="M3.2 12.9L10 16.3L16.8 12.9L19 14.1L10 18.6L1 14.1Z" fill="#626262"/></svg>
<svg class="r" style="left:20px;top:408px;" width="20" height="19" viewBox="0 0 20 19"><circle cx="8" cy="8" r="5.6" fill="none" stroke="#626262" stroke-width="2.6"/><path d="M12.2 12.2L17.8 17.2" stroke="#626262" stroke-width="3" stroke-linecap="round"/></svg>
<svg class="r" style="left:21px;top:768.3px;" width="18" height="18" viewBox="0 0 18 18"><path fill="#626262" fill-rule="evenodd" stroke="#626262" stroke-width="0.8" stroke-linejoin="round" d="M6.19 3.25 L7.56 2.76 L7.51 0.53 L10.49 0.53 L10.44 2.76 L11.81 3.25 L12.58 3.69 L13.68 4.64 L15.59 3.47 L17.08 6.06 L15.12 7.13 L15.38 8.55 L15.38 9.45 L15.12 10.87 L17.08 11.94 L15.59 14.53 L13.68 13.36 L12.58 14.31 L11.81 14.75 L10.44 15.24 L10.49 17.47 L7.51 17.47 L7.56 15.24 L6.19 14.75 L5.42 14.31 L4.32 13.36 L2.41 14.53 L0.92 11.94 L2.88 10.87 L2.62 9.45 L2.62 8.55 L2.88 7.13 L0.92 6.06 L2.41 3.47 L4.32 4.64 L5.42 3.69ZM11.70 9.00A2.7 2.7 0 1 0 6.30 9.00A2.7 2.7 0 1 0 11.70 9.00Z"/><circle cx="9" cy="9" r="2.7" fill="#fff"/></svg>
<svg class="r" style="left:21px;top:815.5px;" width="18" height="17" viewBox="0 0 18 17"><rect x="0" y="0.6" width="17.6" height="3.2" rx="0.8" fill="#626262"/><path d="M1.2 4.9H16.4V14.6C16.4 15.3 15.9 15.8 15.2 15.8H2.4C1.7 15.8 1.2 15.3 1.2 14.6Z" fill="#626262"/><rect x="6.6" y="6.8" width="4.4" height="1.2" rx="0.4" fill="#fff"/></svg>
<div class="t " style="left:510.70px;top:76.80px;font-size:11.20px;color:#9a9a9a;">DASHBIRD.IO</div>
<div class="t " style="left:601.50px;top:76.80px;font-size:11.20px;color:#9a9a9a;">INVENTORY</div>
<div class="t " style="left:685.50px;top:76.80px;font-size:11.20px;color:#9a9a9a;">LAMBDA</div>
<div class="t " style="left:751.00px;top:76.80px;font-size:11.90px;color:#9a9a9a;">US-EAST-1</div>
<svg class="r" style="left:588px;top:77px;" width="11" height="9" viewBox="0 0 11 9"><path d="M0.5 4.5H9.6M6.2 1.2L9.6 4.5L6.2 7.8" fill="none" stroke="#9a9a9a" stroke-width="1"/></svg>
<svg class="r" style="left:671px;top:77px;" width="11" height="9" viewBox="0 0 11 9"><path d="M0.5 4.5H9.6M6.2 1.2L9.6 4.5L6.2 7.8" fill="none" stroke="#9a9a9a" stroke-width="1"/></svg>
<svg class="r" style="left:737px;top:77px;" width="11" height="9" viewBox="0 0 11 9"><path d="M0.5 4.5H9.6M6.2 1.2L9.6 4.5L6.2 7.8" fill="none" stroke="#9a9a9a" stroke-width="1"/></svg>
<div class="r" style="left:511px;top:93px;width:38px;height:38px;background:#fff;border-radius:6px;"></div>
<svg class="r" style="left:510px;top:92px;" width="40" height="40" viewBox="0 0 40 40"><g fill="none" stroke="#f0902a" stroke-width="0.95" stroke-linejoin="round"><path d="M13.3 8.1H20.6L29.1 25.4H31V30.3H25.1L17.1 13.3H13.3Z"/><path d="M15.9 17.5L19.2 23.7L15.6 30.3H9.5Z"/></g></svg>
<div class="t " style="left:560.20px;top:96.20px;font-size:35.80px;color:#1e1e1e;">user-service-prod-get-user-by-id</div>
<div class="r" style="left:511px;top:150px;width:167px;height:73px;background:#fff;"></div>
<div class="r" style="left:510.2px;top:150.2px;width:1.4px;height:72.5px;background:#7275d6;"></div>
<div class="t " style="left:520.40px;top:163.00px;font-size:11.40px;color:#8f8f8f;">INVOCATIONS</div>
<svg class="r" style="left:659px;top:159px;" width="13" height="14" viewBox="0 0 13 14"><path d="M2.2 4.2V1.9H11V4.2M2.4 2L6.6 7.1L2.4 12.2H11V9.9" fill="none" stroke="#5558c8" stroke-width="1.05"/></svg>
<div class="t " style="left:523.50px;top:185.50px;font-size:30.81px;color:#262626;">132</div>
<div class="t " style="left:688.00px;top:163.00px;font-size:10.52px;color:#8f8f8f;">ERRORS</div>
<svg class="r" style="left:822.9px;top:159px;" width="13.7" height="13.8" viewBox="0 0 13.2 13.8"><g fill="none" stroke="#5558c8" stroke-width="1.0" stroke-linecap="round" stroke-linejoin="round"><path d="M3.4 3.3C3.4 1.5 4.8 0.4 6.6 0.4S9.8 1.5 9.8 3.3"/><path d="M2.8 3.4H10.4V8.6C10.4 11.4 8.8 13.3 6.6 13.3S2.8 11.4 2.8 8.6Z"/><path d="M6.6 6.4V13M0.9 2.3L2.8 3.6M12.3 2.3L10.4 3.6M0.3 7.1H2.8M12.9 7.1H10.4M1 13.2L2.9 11.6M12.2 13.2L10.3 11.6"/></g></svg>
<div class="t " style="left:688.00px;top:180.80px;font-size:15.47px;color:#1a1a1a;-webkit-text-stroke:0.45px #1a1a1a;">0</div>
<div class="r" style="left:693px;top:208.8px;width:141px;height:1.2px;background:#9e9e9e;"></div>
<div class="r" style="left:511px;top:223px;width:332px;height:308px;background:#fff;"></div>
<div class="t " style="left:519.00px;top:232.70px;font-size:11.67px;color:#929292;">Time</div>
<div class="r" style="left:634px;top:236px;width:6px;height:6px;background:#3b37b3;"></div>
<div class="t " style="left:645.90px;top:232.70px;font-size:12.20px;color:#4b48c0;-webkit-text-stroke:0.25px #4b48c0;">Successful</div>
<div class="r" style="left:749.6px;top:236px;width:6px;height:6px;background:#f01d1d;"></div>
<div class="t " style="left:761.80px;top:233.70px;font-size:11.87px;color:#4b48c0;-webkit-text-stroke:0.25px #4b48c0;">Errors</div>
<div class="t " style="left:551.82px;top:489.60px;font-size:12.20px;color:#8a8a8a;">0</div>
<div class="r" style="left:561px;top:495px;width:4px;height:1px;background:#cfcfcf;"></div>
<div class="t " style="left:551.82px;top:440.82px;font-size:12.20px;color:#8a8a8a;">5</div>
<div class="r" style="left:561px;top:446px;width:4px;height:1px;background:#cfcfcf;"></div>
<div class="t " style="left:545.03px;top:392.05px;font-size:12.20px;color:#8a8a8a;">10</div>
<div class="r" style="left:561px;top:397px;width:4px;height:1px;background:#cfcfcf;"></div>
<div class="t " style="left:545.03px;top:343.28px;font-size:12.20px;color:#8a8a8a;">15</div>
<div class="r" style="left:561px;top:348px;width:4px;height:1px;background:#cfcfcf;"></div>
<div class="t " style="left:545.03px;top:294.50px;font-size:12.20px;color:#8a8a8a;">20</div>
<div class="r" style="left:561px;top:300px;width:4px;height:1px;background:#cfcfcf;"></div>
<div class="r" style="left:561px;top:495px;width:282px;height:1px;background:#dcdcdc;"></div>
<div class="r" style="left:583.7px;top:496px;width:1px;height:5px;background:#e2e2e2;"></div>
<div class="r" style="left:623.2px;top:496px;width:1px;height:5px;background:#e2e2e2;"></div>
<div class="r" style="left:662.8px;top:496px;width:1px;height:5px;background:#e2e2e2;"></div>
<div class="r" style="left:702.4px;top:496px;width:1px;height:5px;background:#e2e2e2;"></div>
<div class="r" style="left:741.9px;top:496px;width:1px;height:5px;background:#e2e2e2;"></div>
<div class="r" style="left:781.5px;top:496px;width:1px;height:5px;background:#e2e2e2;"></div>
<div class="r" style="left:821.0px;top:496px;width:1px;height:5px;background:#e2e2e2;"></div>
<div class="t " style="left:568.94px;top:506.80px;font-size:12.20px;color:#8a8a8a;">12:00</div>
<div class="t " style="left:727.14px;top:506.80px;font-size:12.20px;color:#8a8a8a;">16:00</div>
<svg class="r" style="left:0;top:0" width="843" height="844"><rect x="582.2" y="426.5" width="3.6" height="68.3" fill="#3b37b3"/><rect x="621.7" y="455.8" width="3.6" height="39.0" fill="#3b37b3"/><rect x="661.3" y="377.7" width="3.6" height="117.1" fill="#3b37b3"/><rect x="700.8" y="475.3" width="3.6" height="19.5" fill="#3b37b3"/><rect x="740.4" y="299.7" width="3.6" height="195.1" fill="#3b37b3"/><rect x="779.9" y="446.0" width="3.6" height="48.8" fill="#3b37b3"/><rect x="819.5" y="465.5" width="3.6" height="29.3" fill="#3b37b3"/><polygon points="584.5,494.8 584.5,465.5 643.5,465.5 643.5,446.0 683.0,446.0 683.0,475.3 762.0,475.3 762.0,465.5 801.7,465.5 801.7,475.3 843.0,475.3 843,494.8" fill="rgb(138,143,222)" fill-opacity="0.6"/><line x1="583.5" y1="295" x2="583.5" y2="427" stroke="#7674d6" stroke-width="1.1"/><circle cx="583.3" cy="295.1" r="4.9" fill="#4846c4"/></svg>
<div class="t " style="left:511.00px;top:550.80px;font-size:14.32px;color:#555;-webkit-text-stroke:0.3px #555;">Recent invocations</div>
<svg class="r" style="left:641px;top:554px;" width="9" height="7" viewBox="0 0 9 7"><path d="M1 1.5L4.5 5L8 1.5" fill="none" stroke="#666" stroke-width="1.1"/></svg>
<div class="r" style="left:511px;top:575.0px;width:329px;height:56.5px;background:#fff;"></div>
<svg class="r" style="left:521px;top:585px;" width="12" height="12" viewBox="0 0 12 12"><g fill="none" stroke="#b8b8b8" stroke-width="0.95"><circle cx="6" cy="6" r="4.6"/><path d="M5.2 3.2L5.7 6.2L7.4 7.9"/></g></svg>
<div class="t " style="left:537.60px;top:584.60px;font-size:10.60px;color:#7a7a7a;">728ms</div>
<svg class="r" style="left:575px;top:587px;" width="13" height="8" viewBox="0 0 13 8"><rect x="0" y="0" width="13" height="5.6" fill="#c8c8c8"/><g fill="#f4f4f4"><rect x="2.2" y="1.6" width="2" height="2.2"/><rect x="5.5" y="1.6" width="2" height="2.2"/><rect x="8.8" y="1.6" width="2" height="2.2"/></g><g fill="#a8a8a8"><rect x="2.7" y="2.2" width="1" height="1"/><rect x="6" y="2.2" width="1" height="1"/><rect x="9.3" y="2.2" width="1" height="1"/></g><rect x="0" y="6.4" width="13" height="1.6" fill="#c8c8c8"/></svg>
<div class="t " style="left:593.01px;top:584.60px;font-size:10.60px;color:#7a7a7a;">85%</div>
<div class="t " style="left:752.60px;top:584.60px;font-size:11.37px;color:#9c9c9c;">22.03 11:49:35</div>
<div class="t " style="left:665.30px;top:585.60px;font-size:10.28px;color:#c4c4c4;">10 minutes ago</div>
<div class="r" style="left:744px;top:585px;width:1px;height:11px;background:#e8e8e8;"></div>
<div class="t " style="left:522.40px;top:606.10px;font-size:14.95px;color:#aaaaaa;">b9421874-b7da-4320-af4a-4a0a49d2c714</div>
<div class="r" style="left:511px;top:637.8px;width:329px;height:56.5px;background:#fff;"></div>
<svg class="r" style="left:521px;top:648px;" width="12" height="12" viewBox="0 0 12 12"><g fill="none" stroke="#b8b8b8" stroke-width="0.95"><circle cx="6" cy="6" r="4.6"/><path d="M5.2 3.2L5.7 6.2L7.4 7.9"/></g></svg>
<div class="t " style="left:537.60px;top:647.35px;font-size:10.60px;color:#7a7a7a;">548ms</div>
<svg class="r" style="left:575px;top:649px;" width="13" height="8" viewBox="0 0 13 8"><rect x="0" y="0" width="13" height="5.6" fill="#c8c8c8"/><g fill="#f4f4f4"><rect x="2.2" y="1.6" width="2" height="2.2"/><rect x="5.5" y="1.6" width="2" height="2.2"/><rect x="8.8" y="1.6" width="2" height="2.2"/></g><g fill="#a8a8a8"><rect x="2.7" y="2.2" width="1" height="1"/><rect x="6" y="2.2" width="1" height="1"/><rect x="9.3" y="2.2" width="1" height="1"/></g><rect x="0" y="6.4" width="13" height="1.6" fill="#c8c8c8"/></svg>
<div class="t " style="left:593.01px;top:647.35px;font-size:10.60px;color:#7a7a7a;">81%</div>
<div class="t " style="left:752.60px;top:647.35px;font-size:11.37px;color:#9c9c9c;">22.03 11:45:00</div>
<div class="t " style="left:665.30px;top:648.35px;font-size:10.28px;color:#c4c4c4;">15 minutes ago</div>
<div class="r" style="left:744px;top:648px;width:1px;height:11px;background:#e8e8e8;"></div>
<div class="t " style="left:522.40px;top:667.85px;font-size:15.22px;color:#aaaaaa;">d07fc61a-f790-433e-b931-8c188843a407</div>
<div class="r" style="left:511px;top:700.5px;width:329px;height:56.5px;background:#fff;"></div>
<svg class="r" style="left:521px;top:710px;" width="12" height="12" viewBox="0 0 12 12"><g fill="none" stroke="#b8b8b8" stroke-width="0.95"><circle cx="6" cy="6" r="4.6"/><path d="M5.2 3.2L5.7 6.2L7.4 7.9"/></g></svg>
<div class="t " style="left:537.60px;top:710.10px;font-size:10.60px;color:#7a7a7a;">985ms</div>
<svg class="r" style="left:575px;top:712px;" width="13" height="8" viewBox="0 0 13 8"><rect x="0" y="0" width="13" height="5.6" fill="#c8c8c8"/><g fill="#f4f4f4"><rect x="2.2" y="1.6" width="2" height="2.2"/><rect x="5.5" y="1.6" width="2" height="2.2"/><rect x="8.8" y="1.6" width="2" height="2.2"/></g><g fill="#a8a8a8"><rect x="2.7" y="2.2" width="1" height="1"/><rect x="6" y="2.2" width="1" height="1"/><rect x="9.3" y="2.2" width="1" height="1"/></g><rect x="0" y="6.4" width="13" height="1.6" fill="#c8c8c8"/></svg>
<div class="t " style="left:593.01px;top:710.10px;font-size:10.60px;color:#7a7a7a;">79%</div>
<svg class="r" style="left:619.8px;top:711.4px;" width="10" height="10" viewBox="0 0 10 10"><g fill="#4a47c8" stroke="#4a47c8" stroke-width="1.2"><line x1="5" y1="5" x2="5.00" y2="1.10"/><circle cx="5.00" cy="1.10" r="1.05" stroke="none"/><line x1="5" y1="5" x2="8.38" y2="3.05"/><circle cx="8.38" cy="3.05" r="1.05" stroke="none"/><line x1="5" y1="5" x2="8.38" y2="6.95"/><circle cx="8.38" cy="6.95" r="1.05" stroke="none"/><line x1="5" y1="5" x2="5.00" y2="8.90"/><circle cx="5.00" cy="8.90" r="1.05" stroke="none"/><line x1="5" y1="5" x2="1.62" y2="6.95"/><circle cx="1.62" cy="6.95" r="1.05" stroke="none"/><line x1="5" y1="5" x2="1.62" y2="3.05"/><circle cx="1.62" cy="3.05" r="1.05" stroke="none"/><circle cx="5" cy="5" r="1.3" stroke="none"/></g></svg>
<div class="t " style="left:752.60px;top:710.10px;font-size:11.37px;color:#9c9c9c;">22.03 11:44:43</div>
<div class="t " style="left:665.30px;top:711.10px;font-size:10.28px;color:#c4c4c4;">15 minutes ago</div>
<div class="r" style="left:744px;top:711px;width:1px;height:11px;background:#e8e8e8;"></div>
<div class="t " style="left:522.40px;top:730.60px;font-size:15.48px;color:#3a3a3a;-webkit-text-stroke:0.5px #3a3a3a;">8d323036-1b37-4314-b533-70a675b1214e</div>
<div class="r" style="left:511px;top:763.2px;width:329px;height:56.5px;background:#fff;"></div>
<svg class="r" style="left:521px;top:773px;" width="12" height="12" viewBox="0 0 12 12"><g fill="none" stroke="#b8b8b8" stroke-width="0.95"><circle cx="6" cy="6" r="4.6"/><path d="M5.2 3.2L5.7 6.2L7.4 7.9"/></g></svg>
<div class="t " style="left:537.60px;top:772.85px;font-size:10.60px;color:#7a7a7a;">95ms</div>
<svg class="r" style="left:569px;top:775px;" width="13" height="8" viewBox="0 0 13 8"><rect x="0" y="0" width="13" height="5.6" fill="#c8c8c8"/><g fill="#f4f4f4"><rect x="2.2" y="1.6" width="2" height="2.2"/><rect x="5.5" y="1.6" width="2" height="2.2"/><rect x="8.8" y="1.6" width="2" height="2.2"/></g><g fill="#a8a8a8"><rect x="2.7" y="2.2" width="1" height="1"/><rect x="6" y="2.2" width="1" height="1"/><rect x="9.3" y="2.2" width="1" height="1"/></g><rect x="0" y="6.4" width="13" height="1.6" fill="#c8c8c8"/></svg>
<div class="t " style="left:587.12px;top:772.85px;font-size:10.60px;color:#7a7a7a;">86%</div>
<div class="t " style="left:752.60px;top:772.85px;font-size:11.37px;color:#9c9c9c;">22.03 11:38:00</div>
<div class="t " style="left:665.30px;top:773.85px;font-size:10.28px;color:#c4c4c4;">22 minutes ago</div>
<div class="r" style="left:744px;top:774px;width:1px;height:11px;background:#e8e8e8;"></div>
<div class="t " style="left:522.40px;top:794.35px;font-size:14.82px;color:#aaaaaa;">b1506a9c-d665-4369-8caa-71e3dc13b7eb</div>
<div class="r" style="left:511px;top:826.0px;width:329px;height:56.5px;background:#fff;"></div>
<svg class="r" style="left:521px;top:836px;" width="12" height="12" viewBox="0 0 12 12"><g fill="none" stroke="#b8b8b8" stroke-width="0.95"><circle cx="6" cy="6" r="4.6"/><path d="M5.2 3.2L5.7 6.2L7.4 7.9"/></g></svg>
<div class="t " style="left:537.60px;top:835.60px;font-size:10.60px;color:#7a7a7a;">55ms</div>
<svg class="r" style="left:569px;top:838px;" width="13" height="8" viewBox="0 0 13 8"><rect x="0" y="0" width="13" height="5.6" fill="#c8c8c8"/><g fill="#f4f4f4"><rect x="2.2" y="1.6" width="2" height="2.2"/><rect x="5.5" y="1.6" width="2" height="2.2"/><rect x="8.8" y="1.6" width="2" height="2.2"/></g><g fill="#a8a8a8"><rect x="2.7" y="2.2" width="1" height="1"/><rect x="6" y="2.2" width="1" height="1"/><rect x="9.3" y="2.2" width="1" height="1"/></g><rect x="0" y="6.4" width="13" height="1.6" fill="#c8c8c8"/></svg>
<div class="t " style="left:587.12px;top:835.60px;font-size:10.60px;color:#7a7a7a;">86%</div>
<div class="t " style="left:752.60px;top:835.60px;font-size:11.37px;color:#9c9c9c;">22.03 11:37:15</div>
<div class="t " style="left:665.30px;top:836.60px;font-size:10.28px;color:#c4c4c4;">23 minutes ago</div>
<div class="r" style="left:744px;top:836px;width:1px;height:11px;background:#e8e8e8;"></div>
<div class="r" style="left:493px;top:800px;width:350px;height:44px;background:linear-gradient(rgba(244,244,244,0), rgba(244,244,244,0.55));"></div>
<div class="r" style="left:0px;top:0px;width:1536px;height:56px;background:#4a45c3;"></div>
<div class="r" style="left:59px;top:0px;width:434px;height:56px;background:#3732a9;"></div>
<div class="r" style="left:0px;top:56px;width:1536px;height:4px;background:linear-gradient(rgba(0,0,0,0.2), rgba(0,0,0,0.06) 50%, rgba(0,0,0,0));"></div>
<div class="r" style="left:0px;top:0px;width:1.2px;height:844px;background:linear-gradient(#b0484f 0%, #b43c64 35%, #923a6e 52%, #733773 66%, #4a3a78 85%, #30306a 100%);"></div>
<svg class="r" style="left:10px;top:5px;" width="40" height="50" viewBox="0 0 40 50"><polygon points="6.4,4.0 6.4,18.1 20.5,32.3 28.8,24.8" fill="#8f93e0"/><polygon points="21.1,18.4 28.5,15.5 28.5,24.8" fill="#fff"/><polygon points="23.5,15.5 28.5,10.9 33.1,15.7" fill="#8f93e0"/><polygon points="13.9,25.9 13.9,39.7 20.8,32.5" fill="#fff"/></svg>
<div class="t " style="left:78.40px;top:20.10px;font-size:17.17px;color:#8c90e0;transform:scaleY(1.12);transform-origin:0 14px;-webkit-text-stroke:0.4px #8c90e0;">Search</div>
<svg class="r" style="left:452px;top:16px;" width="22" height="22" viewBox="0 0 22 22"><circle cx="9.5" cy="9.5" r="6.1" fill="none" stroke="#8c90e0" stroke-width="2.4"/><path d="M14 14L18.6 18.6" stroke="#8c90e0" stroke-width="2.8" stroke-linecap="round"/></svg>
<div class="t " style="left:1411.00px;top:22.80px;font-size:12.77px;color:#8d8fe0;transform:scaleY(1.1);transform-origin:0 10px;-webkit-text-stroke:0.2px #8d8fe0;">DASHBIRD.IO</div>
<svg class="r" style="left:1504px;top:22px;" width="13" height="10" viewBox="0 0 13 10"><path d="M2.8 3.2L6.4 6.6L10 3.2" fill="none" stroke="#8d8fe0" stroke-width="2.1" stroke-linecap="round" stroke-linejoin="round"/></svg>
<div class="r" style="left:834px;top:56px;width:9px;height:788px;background:linear-gradient(90deg, rgba(0,0,0,0) 0%, rgba(0,0,0,0.025) 55%, rgba(0,0,0,0.1) 100%);"></div>
<div class="r" style="left:843px;top:56px;width:693px;height:788px;background:#fff;"></div>
<div class="t " style="left:861.00px;top:78.00px;font-size:11.12px;color:#9a9a9a;">DASHBIRD.IO</div>
<div class="t " style="left:864.60px;top:101.50px;font-size:25.50px;color:#111;letter-spacing:-0.9px;">Request:</div>
<div class="t " style="left:965.00px;top:100.50px;font-size:27.00px;color:#111;letter-spacing:0.3px;">8d323036-1b37-4314-b533-70a675b1214e</div>
<svg class="r" style="left:1508px;top:97px;" width="14" height="14" viewBox="0 0 14 14"><path d="M2.2 2L11.8 11.8M11.8 2L2.2 11.8" stroke="#858585" stroke-width="2.7" stroke-linecap="round"/></svg>
<div class="t " style="left:870.00px;top:163.70px;font-size:11.50px;color:#999;">START</div>
<div class="t " style="left:870.00px;top:181.60px;font-size:16.97px;color:#1e1e1e;-webkit-text-stroke:0.3px #1e1e1e;">11:44</div>
<div class="t " style="left:870.00px;top:201.00px;font-size:12.67px;color:#333;">22.03.2021</div>
<div class="r" style="left:992px;top:151px;width:1px;height:72px;background:#ececec;"></div>
<div class="t " style="left:1001.90px;top:163.70px;font-size:11.50px;color:#999;">DURATION</div>
<div class="t " style="left:1001.90px;top:181.60px;font-size:16.59px;color:#1e1e1e;-webkit-text-stroke:0.3px #1e1e1e;">985ms</div>
<div class="r" style="left:1124px;top:151px;width:1px;height:72px;background:#ececec;"></div>
<div class="t " style="left:1133.80px;top:163.70px;font-size:11.50px;color:#999;">MEMORY</div>
<div class="t " style="left:1133.80px;top:181.60px;font-size:16.64px;color:#1e1e1e;-webkit-text-stroke:0.3px #1e1e1e;">79%</div>
<div class="t " style="left:1133.80px;top:201.00px;font-size:12.15px;color:#333;">128MB</div>
<div class="r" style="left:1256px;top:151px;width:1px;height:72px;background:#ececec;"></div>
<div class="t " style="left:1265.70px;top:163.70px;font-size:11.50px;color:#999;">ERROR</div>
<div class="t " style="left:1265.70px;top:181.60px;font-size:15.73px;color:#1e1e1e;-webkit-text-stroke:0.3px #1e1e1e;">none</div>
<div class="r" style="left:1388px;top:151px;width:1px;height:72px;background:#ececec;"></div>
<div class="t " style="left:1397.60px;top:163.70px;font-size:11.50px;color:#999;">FLAGS</div>
<div class="t " style="left:1397.60px;top:181.60px;font-size:15.73px;color:#1e1e1e;-webkit-text-stroke:0.3px #1e1e1e;">none</div>
<svg class="r" style="left:970.8px;top:161px;" width="14" height="12" viewBox="0 0 14 12"><g fill="none" stroke="#5d60cc" stroke-width="1.1"><path d="M1.2 0.8V11.2M2.6 6H13.2M6.6 2L2.6 6L6.6 10"/></g></svg>
<svg class="r" style="left:1101px;top:159px;" width="15" height="15" viewBox="0 0 15 15"><g fill="none" stroke="#5d60cc" stroke-width="1.2"><circle cx="7.5" cy="7.5" r="6.3"/><path d="M7 3.6V7.8L9.8 10"/></g></svg>
<svg class="r" style="left:1229px;top:160px;" width="20" height="14" viewBox="0 0 20 14"><g fill="none" stroke="#5d60cc" stroke-width="1.05"><rect x="1.6" y="1.9" width="16.9" height="9.7" rx="0.9"/><path d="M1.6 8.4H18.5"/><rect x="3.9" y="4" width="2.2" height="2.4"/><rect x="8.0" y="4" width="2.2" height="2.4"/><rect x="12.7" y="4" width="2.2" height="2.4"/></g><path d="M3.4 10H17" stroke="#5d60cc" stroke-width="1" stroke-dasharray="1.6,2" opacity="0.6"/></svg>
<svg class="r" style="left:1365px;top:159.8px;" width="13.2" height="13.8" viewBox="0 0 13.2 13.8"><g fill="none" stroke="#5d60cc" stroke-width="1.0" stroke-linecap="round" stroke-linejoin="round"><path d="M3.4 3.3C3.4 1.5 4.8 0.4 6.6 0.4S9.8 1.5 9.8 3.3"/><path d="M2.8 3.4H10.4V8.6C10.4 11.4 8.8 13.3 6.6 13.3S2.8 11.4 2.8 8.6Z"/><path d="M6.6 6.4V13M0.9 2.3L2.8 3.6M12.3 2.3L10.4 3.6M0.3 7.1H2.8M12.9 7.1H10.4M1 13.2L2.9 11.6M12.2 13.2L10.3 11.6"/></g></svg>
<svg class="r" style="left:1495px;top:159px;" width="18" height="16" viewBox="0 0 18 16"><g fill="none" stroke="#5d60cc" stroke-width="1.2" stroke-linejoin="round"><path d="M1.6 1V14.6M1.6 1.6L16 6.4L1.6 11"/></g></svg>
<div class="t " style="left:861.30px;top:242.40px;font-size:16.52px;color:#666;">Trace</div>
<svg class="r" style="left:1503px;top:245px;" width="20" height="13" viewBox="0 0 20 13"><text x="1" y="7.5" font-family="Liberation Sans" font-size="8.6" fill="#a0a0a0" textLength="16.5">aws</text><path d="M1.5 9C6 12 12 12 17 9.3M15.2 8.4L17.6 9.2L16.6 11" fill="none" stroke="#a0a0a0" stroke-width="0.9"/></svg>
<div class="r" style="left:870px;top:276px;width:618px;height:19px;background:#878de0;"></div>
<div class="r" style="left:877.5px;top:295px;width:610px;height:19.5px;background:#f68b20;"></div>
<div class="r" style="left:1165.3px;top:314.5px;width:322px;height:19px;background:#fbc68c;"></div>
<div class="t " style="left:875.40px;top:279.20px;font-size:11.34px;color:#1a1a1a;">prod-billing-service/prod [AWS::ApiGateway::Stage] (2s)</div>
<div class="t " style="left:882.80px;top:298.60px;font-size:11.58px;color:#1a1a1a;">billing-service-prod-get-payment-methods-data [AWS::Lambda] (2s)</div>
<div class="t " style="left:1170.40px;top:317.80px;font-size:11.54px;color:#1a1a1a;">billing-service-prod-get-payment-methods-data [AWS::Lam...</div>
<svg class="r" style="left:870px;top:326px" width="296" height="2"><line x1="0" y1="0.8" x2="296" y2="0.8" stroke="#e0e0e0" stroke-width="1" stroke-dasharray="3.5,6"/></svg>
<div class="r" style="left:870px;top:307px;width:6px;height:1px;background:#ddd;"></div>
<div class="r" style="left:869.5px;top:295px;width:1px;height:48px;background:#e2e2e2;"></div>
<div class="r" style="left:870px;top:342.5px;width:618px;height:1.2px;background:#e0e0e0;"></div>
<div class="r" style="left:869.5px;top:343px;width:1px;height:8px;background:#cfcfcf;"></div>
<div class="t " style="left:860.93px;top:352.50px;font-size:9.60px;color:#444;">0ms</div>
<div class="r" style="left:934.8px;top:343px;width:1px;height:8px;background:#cfcfcf;"></div>
<div class="t " style="left:920.89px;top:352.50px;font-size:9.60px;color:#444;">200ms</div>
<div class="r" style="left:1000.1px;top:343px;width:1px;height:8px;background:#cfcfcf;"></div>
<div class="t " style="left:986.19px;top:352.50px;font-size:9.60px;color:#444;">400ms</div>
<div class="r" style="left:1065.4px;top:343px;width:1px;height:8px;background:#cfcfcf;"></div>
<div class="t " style="left:1051.49px;top:352.50px;font-size:9.60px;color:#444;">600ms</div>
<div class="r" style="left:1130.7px;top:343px;width:1px;height:8px;background:#cfcfcf;"></div>
<div class="t " style="left:1116.79px;top:352.50px;font-size:9.60px;color:#444;">800ms</div>
<div class="r" style="left:1196.0px;top:343px;width:1px;height:8px;background:#cfcfcf;"></div>
<div class="t " style="left:1178.09px;top:352.50px;font-size:9.60px;color:#444;">1,000ms</div>
<div class="r" style="left:1261.3px;top:343px;width:1px;height:8px;background:#cfcfcf;"></div>
<div class="t " style="left:1256.73px;top:352.50px;font-size:9.60px;color:#444;">1s</div>
<div class="r" style="left:1326.6px;top:343px;width:1px;height:8px;background:#cfcfcf;"></div>
<div class="t " style="left:1322.03px;top:352.50px;font-size:9.60px;color:#444;">1s</div>
<div class="r" style="left:1391.9px;top:343px;width:1px;height:8px;background:#cfcfcf;"></div>
<div class="t " style="left:1387.33px;top:352.50px;font-size:9.60px;color:#444;">2s</div>
<div class="r" style="left:1457.2px;top:343px;width:1px;height:8px;background:#cfcfcf;"></div>
<div class="t " style="left:1452.63px;top:352.50px;font-size:9.60px;color:#444;">2s</div>
<div class="t " style="left:861.20px;top:405.20px;font-size:16.74px;color:#666;">Logs</div>
<svg class="r" style="left:1416px;top:407px;" width="15" height="16" viewBox="0 0 15 16"><g fill="none" stroke="#aaa" stroke-width="1"><rect x="1.4" y="3.5" width="8" height="11" rx="1.3"/><path d="M4.6 3.3V2.3C4.6 1.5 5.2 0.9 6 0.9H10.4L12.6 3.1V10.6C12.6 11.4 12 12 11.2 12H9.6"/></g></svg>
<svg class="r" style="left:1452px;top:407px;" width="19" height="15" viewBox="0 0 19 15"><g fill="none" stroke="#999" stroke-width="1.1"><path d="M6.6 3.9L2.4 7.5L6.6 11.1M12.6 3.9L16.8 7.5L12.6 11.1M11.6 1L7.5 14"/></g></svg>
<svg class="r" style="left:1493px;top:408px;" width="20" height="13" viewBox="0 0 20 13"><text x="1" y="7.5" font-family="Liberation Sans" font-size="8.6" fill="#a0a0a0" textLength="16.5">aws</text><path d="M1.5 9C6 12 12 12 17 9.3M15.2 8.4L17.6 9.2L16.6 11" fill="none" stroke="#a0a0a0" stroke-width="0.9"/></svg>
<div class="t m" style="left:873.20px;top:446.20px;font-size:13.50px;color:#1a1a1a;font-weight:bold;">START  Version: $LATEST</div>
<div class="t m" style="left:1067.60px;top:448.20px;font-size:11.80px;color:#555;">[+0ms]</div>
<div class="r" style="left:861px;top:464px;width:659px;height:1px;background:#e8e8e8;"></div>
<div class="t m" style="left:873.20px;top:472.00px;font-size:13.50px;color:#1a1a1a;font-weight:bold;">REPORT  Duration: 984.5 ms      Billed Duration: 985 ms         Memory Size:</div>
<div class="t m" style="left:873.20px;top:491.80px;font-size:13.50px;color:#1a1a1a;font-weight:bold;">128 MB  Max Memory Used: 101 MB Init Duration: 570.36 ms</div>
<div class="t m" style="left:1334.90px;top:493.80px;font-size:11.80px;color:#555;">[+985ms]</div>
<div class="t m" style="left:873.20px;top:517.10px;font-size:13.50px;color:#a0a0a0;">XRAY TraceId: 1-6058670a-340d122060b186182530370a       SegmentId:</div>
<div class="t m" style="left:873.20px;top:537.10px;font-size:13.50px;color:#a0a0a0;">6d04c517082a61da</div>
<div class="r" style="left:1460.8px;top:770.4px;width:58px;height:58px;background:#4a45c3;border-radius:50%;box-shadow:0 2px 10px rgba(0,0,0,0.10);"></div>
<svg class="r" style="left:1475px;top:783px;" width="30" height="33" viewBox="0 0 30 33"><path d="M4 0.7H25.6C27.3 0.7 28.6 2 28.6 3.7V32L19.5 28.2H4C2.3 28.2 1 26.9 1 25.2V3.7C1 2 2.3 0.7 4 0.7Z" fill="#fff"/><path d="M5.1 20.1Q14.7 26.3 24.3 20.1" fill="none" stroke="#4a45c3" stroke-width="1.5" stroke-linecap="round"/></svg>
<div class="r" style="left:843px;top:812px;width:190px;height:32px;background:radial-gradient(ellipse 100% 100% at 0% 100%, rgba(0,0,0,0.065), rgba(0,0,0,0.03) 50%, rgba(0,0,0,0) 100%);"></div>
</body></html>
